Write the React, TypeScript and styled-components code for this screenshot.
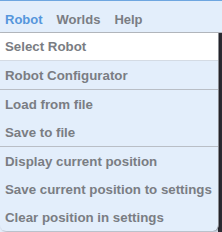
import styled, { createGlobalStyle } from "styled-components";

const GlobalStyle = createGlobalStyle`
  html, body {
    margin: 0;
    padding: 0;
    background: #e4eefb;
  }
  body {
    font-family: "Liberation Sans", Arial, sans-serif;
  }
`;

type Item = { label: string; active?: boolean };

const groups: Item[][] = [
  [{ label: "Select Robot", active: true }, { label: "Robot Configurator" }],
  [{ label: "Load from file" }, { label: "Save to file" }],
  [
    { label: "Display current position" },
    { label: "Save current position to settings" },
    { label: "Clear position in settings" },
  ],
];

const menus = ["Robot", "Worlds", "Help"];

export default function App() {
  return (
    <>
      <GlobalStyle />
      <Root>
        <MenuBar>
          {menus.map((m, i) => (
            <MenuTitle key={m} open={i === 0}>
              {m}
            </MenuTitle>
          ))}
        </MenuBar>
        <Main>
          <Dropdown>
            {groups.map((group, gi) => (
              <Group key={gi} last={gi === groups.length - 1}>
                {group.map((item) => (
                  <Row key={item.label} active={item.active}>
                    {item.label}
                  </Row>
                ))}
              </Group>
            ))}
          </Dropdown>
        </Main>
      </Root>
    </>
  );
}

const Root = styled.div`
  width: 222px;
  height: 232px;
  display: flex;
  flex-direction: column;
  overflow: hidden;
`;

const MenuBar = styled.div`
  box-sizing: border-box;
  height: 33px;
  border-top: 1px solid #6ea6e0;
  border-bottom: 1px solid #b4b8be;
  background: #e3eefb;
  display: flex;
  align-items: center;
  gap: 14px;
  padding: 5px 5px 0;
`;

const MenuTitle = styled.span<{ open?: boolean }>`
  font-size: 13px;
  font-weight: bold;
  color: ${(p) => (p.open ? "#5596dc" : "#7a7d83")};
`;

const Main = styled.div`
  position: relative;
  flex: 1;
  background: linear-gradient(to right, #e4eefb 218px, #2c2c34 218px);
`;

const Dropdown = styled.div`
  position: absolute;
  top: 0;
  left: 0;
  width: 218px;
  background: #e3eefb;
  border-right: 1px solid #8a8d92;
  border-radius: 0 0 6px 6px;
  overflow: hidden;
  box-shadow: 1px 1px 2px rgba(0, 0, 0, 0.25);
`;

const Group = styled.div<{ last?: boolean }>`
  border-bottom: ${(p) => (p.last ? "none" : "1px solid #b9bec6")};
`;

const Row = styled.div<{ active?: boolean }>`
  height: ${(p) => (p.active ? "27px" : "28px")};
  display: flex;
  align-items: center;
  padding: 0 5px;
  font-size: 13.3px;
  font-weight: bold;
  color: #7a7d83;
  white-space: nowrap;
  background: ${(p) => (p.active ? "#ffffff" : "transparent")};
  border-bottom: ${(p) => (p.active ? "1px solid #d4dbe4" : "none")};
`;
